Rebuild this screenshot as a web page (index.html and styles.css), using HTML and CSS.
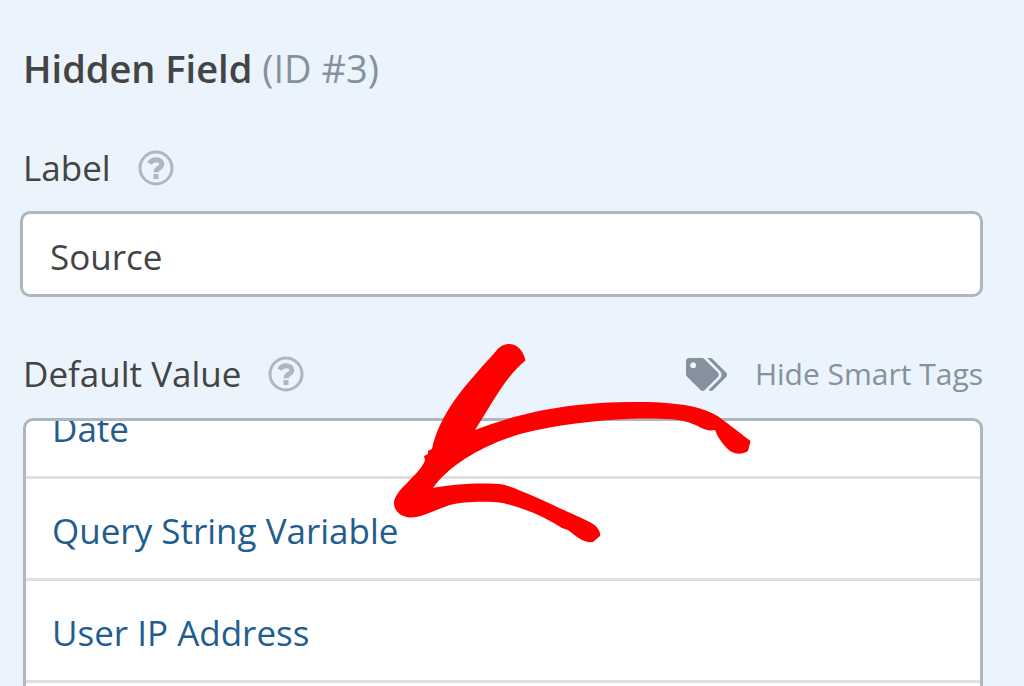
FILE: index.html
```html
<!DOCTYPE html>
<html lang="en">
<head>
    <meta charset="UTF-8">
    <meta name="viewport" content="width=device-width, initial-scale=1.0">
    <title>Field Options</title>
    <link rel="stylesheet" href="styles.css">
</head>
<body>
    <form class="panel">
        <h1>Hidden Field <span class="field-id">(ID #3)</span></h1>

        <div class="label-row">
            <label for="fieldLabel">Label</label>
            <svg class="help" viewBox="0 0 36 36">
                <circle cx="18" cy="18" r="16"/>
                <path d="M11.5 13.5C13 10.8 15.3 9.7 18 9.7C21.3 9.7 23.8 11.5 23.8 14.2C23.8 18 18 17.8 18 22.3"/>
                <rect x="15.500" y="24" width="5" height="5"/>
            </svg>
        </div>
        <input type="text" id="fieldLabel" class="text-input" value="Source">

        <!-- Default Value with smart tags -->
        <div class="label-row">
            <span>Default Value</span>
            <svg class="help" viewBox="0 0 36 36">
                <circle cx="18" cy="18" r="16"/>
                <path d="M11.5 13.5C13 10.8 15.3 9.7 18 9.7C21.3 9.7 23.8 11.5 23.8 14.2C23.8 18 18 17.8 18 22.3"/>
                <rect x="15.500" y="24" width="5" height="5"/>
            </svg>
            <a href="#" class="toggle-tags">
                <svg class="tags-icon" viewBox="0 0 640 512">
                    <path d="M497.941 225.941L286.059 14.059A48 48 0 0 0 252.118 0H48C21.490 0 0 21.490 0 48v204.118a48 48 0 0 0 14.059 33.941l211.882 211.882c18.744 18.745 49.136 18.746 67.882 0l204.118-204.118c18.745-18.745 18.745-49.137 0-67.882zM112 160c-26.510 0-48-21.490-48-48s21.490-48 48-48 48 21.490 48 48-21.490 48-48 48zm513.941 133.823L421.823 497.941c-18.745 18.745-49.137 18.745-67.882 0l-.36-.36L527.640 323.522c16.999-16.999 26.362-39.600 26.362-63.640s-9.362-46.641-26.362-63.640L331.397 0h48.721a48 48 0 0 1 33.941 14.059l211.882 211.882c18.745 18.745 18.745 49.137 0 67.882z"/>
                </svg>
                Hide Smart Tags
            </a>
        </div>
        <div class="tags-box">
            <ul class="tags-list">
                <li><a href="#">Date</a></li>
                <li><a href="#">Query String Variable</a></li>
                <li><a href="#">User IP Address</a></li>
            </ul>
        </div>

        <svg class="arrow" viewBox="394 344 357 199">
            <path d="M509 344C517 344 523 350 525.500 360.500C506 376 494 400 475 430C522 412 570 402 637 402C690 402 711 410 723 420C735 429 744 436 750.500 441L748 451C740 456 731 454 725 446C720 441 717 435 715 430C706 432 701 427 693 424C679 418 660 418.500 637 418.500C595 420 555 425 520 434C483 445 449 465 433 488C450 484 485 482 503 484.500C518 489 535 497 553 505C572 514 583 518 593 524C598 527 601 533 600 536L593 542C584 543 578 538 568 530L562 528C548 519 528 509 503 503C490 501 464 501 450 505C434 510 421 518 410 517.500C401 517 394 511 394 503C394 490 421 474 425 460L424 456L428 454L428 451L432 449C438 421 456 396 474 376C484 364 492 356 497 350C500 346 505 344 509 344Z"/>
        </svg>
    </form>
</body>
</html>
```
FILE: styles.css
```css
* {
    box-sizing: border-box;
}

body {
    margin: 0;
    background-color: #ebf3fc;
    color: #444;
    font-family: "Segoe UI", "Open Sans", "Noto Sans", sans-serif;
    font-size: 35px;
    line-height: 52px;
}

.panel {
    position: relative;
    display: flex;
    flex-direction: column;
    height: 100vh;
    padding: 42px 41px 0 20px;
    overflow: hidden;
}

h1 {
    margin: 0 0 48px 3px;
    font-size: 38px;
    font-weight: 600;
    line-height: 52px;
}

.field-id {
    color: #86919e;
    font-weight: 400;
}

.label-row {
    display: flex;
    align-items: center;
    margin-left: 3px;
}

.help {
    width: 36px;
    height: 36px;
    margin-left: 27px;
    fill: none;
    stroke: #b0b6bd;
    stroke-width: 3;
}

.help path {
    stroke-width: 5;
}

.help rect {
    fill: #b0b6bd;
    stroke: none;
}

.text-input {
    width: 100%;
    height: 86px;
    margin: 17px 0 51px;
    padding: 4px 27px 0;
    border: 3px solid #b0b6bd;
    border-radius: 10px;
    background: white;
    color: #444;
    font: inherit;
}

.toggle-tags {
    display: flex;
    align-items: center;
    gap: 28px;
    margin-left: auto;
    color: #86919e;
    font-size: 30px;
    text-decoration: none;
}

.tags-icon {
    width: 41px;
    height: 33px;
    fill: #86919e;
}

.tags-box {
    flex: 1;
    margin: 18px 0 0 3px;
    border: 3px solid #b0b6bd;
    border-bottom: none;
    border-radius: 10px 10px 0 0;
    background: white;
    overflow: hidden;
}

/* list is scrolled part way past its first tag */
.tags-list {
    margin: -44px 0 0;
    padding: 0;
    list-style: none;
}

.tags-list li {
    border-bottom: 3px solid #dfdfdf;
}

.tags-list a {
    display: block;
    padding: 26px 26px 21px;
    color: #215d8f;
    text-decoration: none;
}

.arrow {
    position: absolute;
    top: 344px;
    left: 394px;
    width: 357px;
    height: 199px;
    fill: #f00;
    overflow: visible;
}
```
